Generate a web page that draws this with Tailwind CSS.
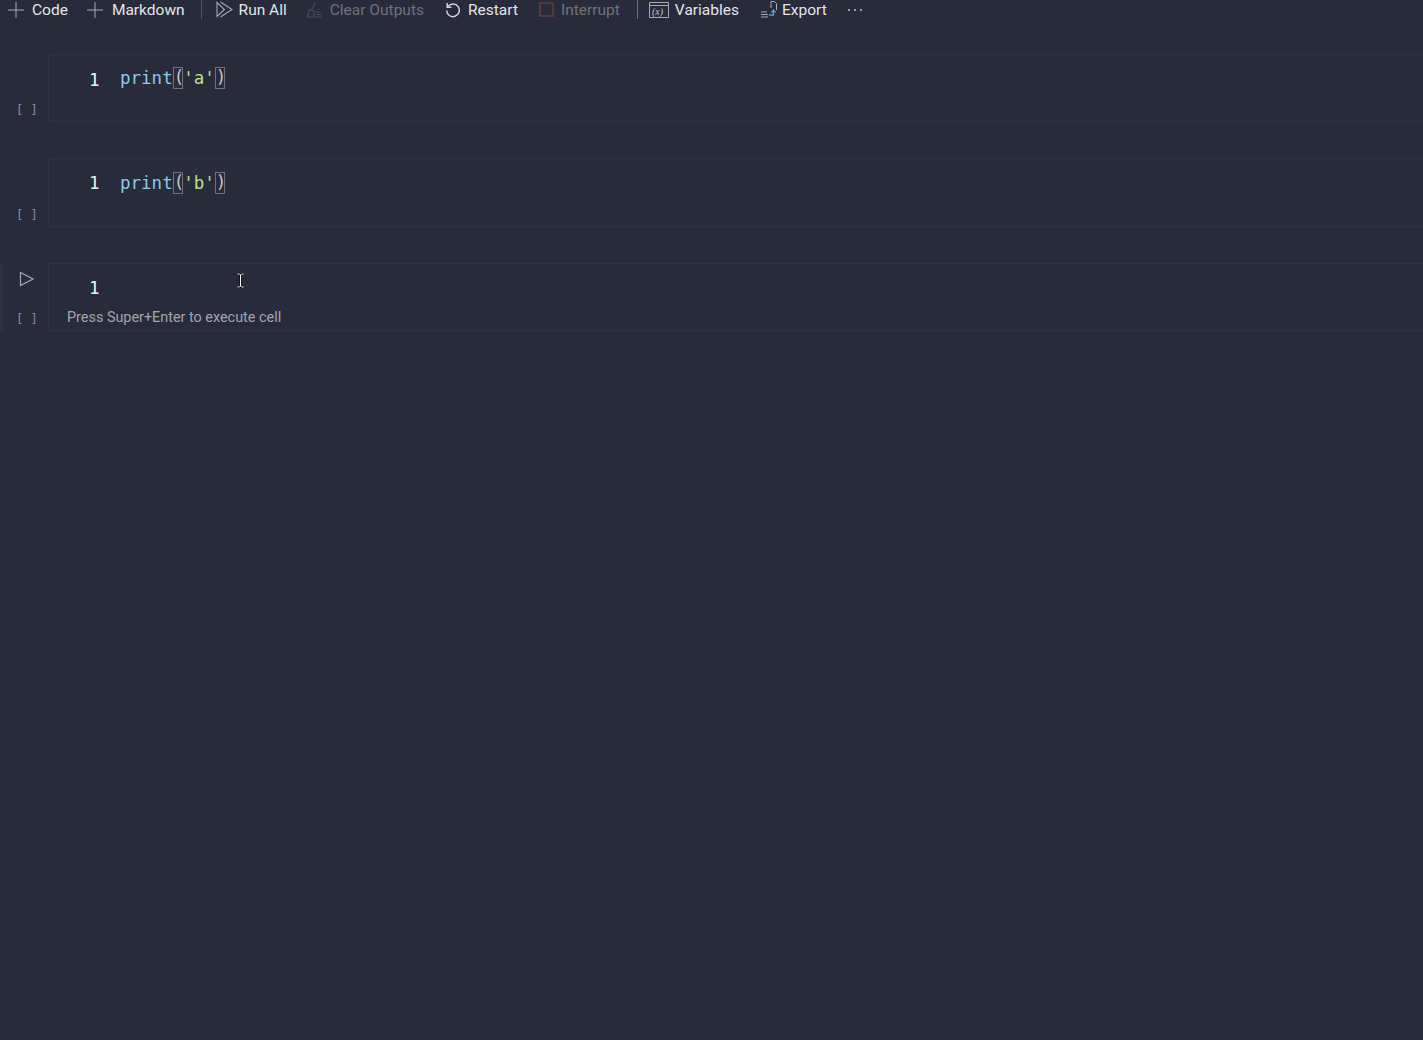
<!DOCTYPE html>
<html lang="en">
<head>
<meta charset="UTF-8">
<title>Notebook</title>
<script src="https://cdn.jsdelivr.net/npm/@tailwindcss/browser@4"></script>
</head>
<body class="relative h-[1040px] w-[1423px] overflow-hidden bg-[#282c3a] font-['Roboto',sans-serif] text-[#e2e4e8]">

<!-- toolbar -->
<div class="flex h-[19px] items-center pl-[8px] text-[15.500px] leading-[19px]">
  <div class="flex items-center">
    <svg width="16" height="16" viewBox="0 0 16 16" fill="none" stroke="#a6a9b1" stroke-width="1"><path d="M8 0v16M0 8h16"/></svg>
    <span class="ml-[8px] translate-y-px">Code</span>
  </div>
  <div class="ml-[19px] flex items-center">
    <svg width="16" height="16" viewBox="0 0 16 16" fill="none" stroke="#a6a9b1" stroke-width="1"><path d="M8 0v16M0 8h16"/></svg>
    <span class="ml-[9px] translate-y-px">Markdown</span>
  </div>
  <div class="ml-[16px] h-[19px] w-px bg-[#4e515c]"></div>
  <div class="ml-[14px] flex items-center">
    <svg width="17" height="17" viewBox="0 0 17 17" fill="none" stroke="#a6a9b1" stroke-width="1.100"><path d="M1 1.500v14L8.500 8.500zM4.500 1 16 8.500 4.500 16"/></svg>
    <span class="ml-[6px] translate-y-px">Run All</span>
  </div>
  <div class="ml-[20px] flex items-center text-[#6f727c]">
    <svg width="16" height="16" viewBox="0 0 16 16" fill="none" stroke="#4c4f5b" stroke-width="1.100"><path d="M8.500.500 5 7M2.500 7.500l5 2-1 5.500H.500zM9.500 10h3M9.500 12.500h5M8 15h6"/></svg>
    <span class="ml-[7px] translate-y-px">Clear Outputs</span>
  </div>
  <div class="ml-[21px] flex items-center">
    <svg width="16" height="16" viewBox="0 0 16 16" fill="none" stroke="#d0d2d8" stroke-width="1.500"><path d="M3 4.500A6.300 6.300 0 1 1 1.700 8.500"/><path d="M2.200 1v4.300h4.300"/></svg>
    <span class="ml-[7px] translate-y-px">Restart</span>
  </div>
  <div class="ml-[21px] flex items-center text-[#6f727c]">
    <div class="h-[15px] w-[15px] border-2 border-[#53393f]"></div>
    <span class="ml-[7px] translate-y-px">Interrupt</span>
  </div>
  <div class="ml-[17px] h-[19px] w-px bg-[#6a6d77]"></div>
  <div class="ml-[11px] flex items-center">
    <svg width="20" height="16" viewBox="0 0 20 16" fill="none" stroke="#a6a9b1" stroke-width="1"><path d="M.500.500h19v15H.500zM.500 3.500h19"/><text x="3" y="13" font-size="10" font-style="italic" fill="#c4c6cc" stroke="none" font-family="Liberation Serif">(x)</text></svg>
    <span class="ml-[6px] translate-y-px">Variables</span>
  </div>
  <div class="ml-[22px] flex items-center">
    <svg width="16" height="17" viewBox="0 0 16 17" fill="none" stroke="#a6a9b1" stroke-width="1"><path d="M10 7V.500h3.500l2 2V9"/><path d="M0 11h6M0 13.500h7M0 16h7"/><path d="M8 14h4.500V9.500M10.500 11.500l2-2.500 2 2.500" stroke="#5b9bd0" stroke-width="1.300"/></svg>
    <span class="ml-[5px] translate-y-px">Export</span>
  </div>
  <div class="ml-[20px] flex h-[16px] w-[16px] items-center justify-between px-px">
    <i class="block h-[2px] w-[2px] rounded-full bg-[#c0c2c8]"></i>
    <i class="block h-[2px] w-[2px] rounded-full bg-[#c0c2c8]"></i>
    <i class="block h-[2px] w-[2px] rounded-full bg-[#c0c2c8]"></i>
  </div>
</div>

<!-- cells -->
<div class="mt-[35px] flex h-[68px] w-full">
  <div class="relative w-[48px] shrink-0">
    <span class="absolute left-[16px] top-[49px] font-['DejaVu_Sans_Mono',monospace] text-[12px] leading-[14px] text-[#8b8e97]">[ ]</span>
  </div>
  <div class="grow border-y border-l border-[#2f3341] pl-[41px] pt-[11px]">
    <div class="flex h-[24px] items-center font-['DejaVu_Sans_Mono',monospace] text-[17.500px] leading-[24px]">
      <span class="w-[10px] -translate-x-px pt-[3px] text-[#e6f3fa]">1</span>
      <span class="ml-[20px] text-[#86cbe8]">print</span><span class="h-[22px] w-[10.500px] border border-[#6f727a] leading-[19px] text-[#c4c6cc]">(</span><span class="text-[#b5e08a]">'a'</span><span class="h-[22px] w-[10.500px] border border-[#6f727a] leading-[19px] text-[#c4c6cc]">)</span>
    </div>
  </div>
</div>

<div class="mt-[36px] flex h-[69px] w-full">
  <div class="relative w-[48px] shrink-0">
    <span class="absolute left-[16px] top-[50px] font-['DejaVu_Sans_Mono',monospace] text-[12px] leading-[14px] text-[#8b8e97]">[ ]</span>
  </div>
  <div class="grow border-y border-l border-[#2f3341] pl-[41px] pt-[12px]">
    <div class="flex h-[24px] items-center font-['DejaVu_Sans_Mono',monospace] text-[17.500px] leading-[24px]">
      <span class="w-[10px] -translate-x-px text-[#e6f3fa]">1</span>
      <span class="ml-[20px] text-[#86cbe8]">print</span><span class="h-[22px] w-[10.500px] border border-[#6f727a] leading-[19px] text-[#c4c6cc]">(</span><span class="text-[#b5e08a]">'b'</span><span class="h-[22px] w-[10.500px] border border-[#6f727a] leading-[19px] text-[#c4c6cc]">)</span>
    </div>
  </div>
</div>

<div class="mt-[36px] flex h-[68px] w-full">
  <div class="relative w-[48px] shrink-0">
    <div class="absolute left-0 top-0 h-[68px] w-[3px] bg-[#2f3341]"></div>
    <svg class="absolute left-[19px] top-[8px]" width="16" height="16" viewBox="0 0 16 16" fill="none" stroke="#a6a9b1" stroke-width="1.200"><path d="M1.500 1.500v13L14 8z"/></svg>
    <span class="absolute left-[16px] top-[49px] font-['DejaVu_Sans_Mono',monospace] text-[12px] leading-[14px] text-[#8b8e97]">[ ]</span>
  </div>
  <div class="relative grow border-y border-l border-[#2f3341] pl-[41px] pt-[11px]">
    <div class="flex h-[24px] items-center font-['DejaVu_Sans_Mono',monospace] text-[17.500px] leading-[24px]">
      <span class="w-[10px] -translate-x-px pt-[2px] text-[#e6f3fa]">1</span>
    </div>
    <p class="absolute left-[18px] top-[45px] text-[14.400px] leading-[17px] text-[#a3a5ad]">Press Super+Enter to execute cell</p>
    <svg class="absolute left-[188px] top-[9px]" width="7" height="15" viewBox="0 0 7 15" fill="none"><path d="M.500 1h2l1 1 1-1h2M3.500 2v11M.500 14h2l1-1 1 1h2" stroke="#000" stroke-width="2"/><path d="M.500 1h2l1 1 1-1h2M3.500 2v11M.500 14h2l1-1 1 1h2" stroke="#fff" stroke-width="1"/></svg>
  </div>
</div>
</body>
</html>
